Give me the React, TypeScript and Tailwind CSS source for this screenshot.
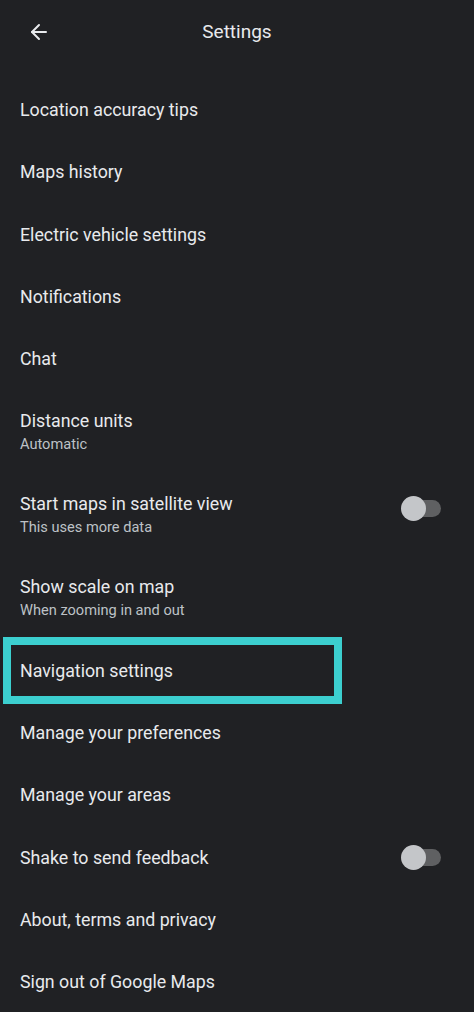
import { ArrowLeft } from "lucide-react"

type Item = { title: string; sub?: string; toggle?: boolean; highlight?: boolean }

const items: Item[] = [
  { title: "Location accuracy tips" },
  { title: "Maps history" },
  { title: "Electric vehicle settings" },
  { title: "Notifications" },
  { title: "Chat" },
  { title: "Distance units", sub: "Automatic" },
  { title: "Start maps in satellite view", sub: "This uses more data", toggle: true },
  { title: "Show scale on map", sub: "When zooming in and out" },
  { title: "Navigation settings", highlight: true },
  { title: "Manage your preferences" },
  { title: "Manage your areas" },
  { title: "Shake to send feedback", toggle: true },
  { title: "About, terms and privacy" },
  { title: "Sign out of Google Maps" },
]

function Toggle() {
  return (
    <div className="relative w-[40px] h-[25px] flex items-center">
      <div className="absolute right-0 w-[28px] h-[17px] rounded-full bg-[#5f6062]" />
      <div className="absolute left-0 w-[25px] h-[25px] rounded-full bg-[#c4c6c9]" />
    </div>
  )
}

function Row({ it }: { it: Item }) {
  return (
    <div
      className={
        "relative flex items-center justify-between pl-5 pr-[33px] " +
        (it.sub ? "h-[83px] items-start pt-[19px]" : "h-[62.3px]")
      }
    >
      {it.highlight && (
        <div className="absolute left-[3px] top-[-2px] w-[339px] h-[67px] border-[8px] border-[#3ccfcf]" />
      )}
      <div className="flex flex-col">
        <div className="text-[17.8px] leading-[24px] text-[#e8eaed]">{it.title}</div>
        {it.sub && <div className="text-[14.6px] leading-[20px] text-[#bdc1c6] mt-[1px]">{it.sub}</div>}
      </div>
      {it.toggle && (
        <div className={it.sub ? "mt-[-4px] self-start pt-[8px]" : ""}>
          <Toggle />
        </div>
      )}
    </div>
  )
}

export default function App() {
  return (
    <div className="w-[474px] h-[1012px] bg-[#202124] overflow-hidden" style={{ fontFamily: "Roboto, 'Noto Sans', sans-serif" }}>
      <div className="relative h-[64px] flex items-center justify-center">
        <ArrowLeft className="absolute left-[27px] w-[24px] h-[24px] text-[#e8eaed]" strokeWidth={2} />
        <div className="text-[19px] text-[#e8eaed]">Settings</div>
      </div>
      <div className="pt-[15px]">
        {items.map((it) => (
          <Row key={it.title} it={it} />
        ))}
      </div>
    </div>
  )
}
